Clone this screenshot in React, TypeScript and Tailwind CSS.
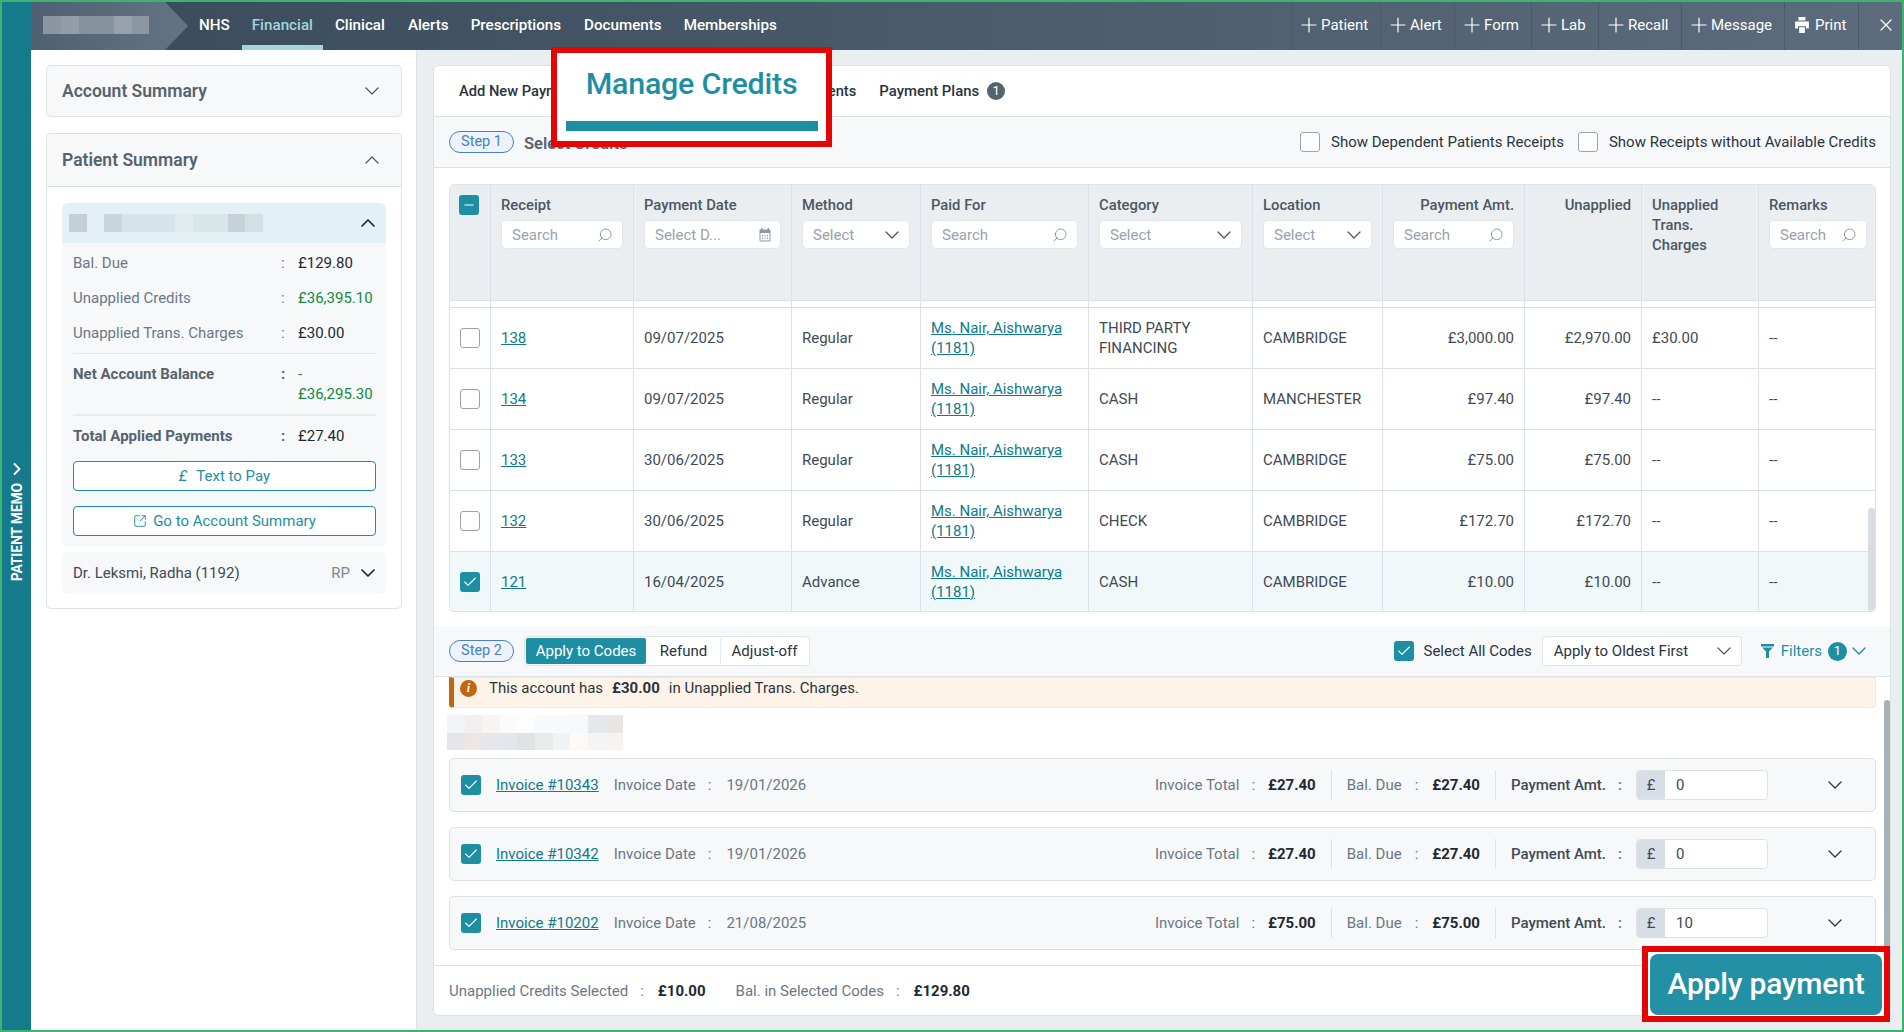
import React from "react";
import { ChevronDown, ChevronUp, ChevronRight, Search, Plus, X, Check, Minus, SquareArrowOutUpRight } from "lucide-react";

const COLS = "grid grid-cols-[41px_143px_158px_129px_168px_164px_130px_142px_117px_117px_118px]";

const Box = ({ on }: { on?: boolean }) =>
  on ? (
    <span className="w-5 h-5 rounded-[3px] bg-[#1e8fa3] flex items-center justify-center shrink-0">
      <Check size={16} strokeWidth={1.6} className="text-white" />
    </span>
  ) : (
    <span className="w-5 h-5 rounded-[3px] bg-white border border-[#98a3ae] shrink-0 block" />
  );

const Cal = () => (
  <svg width="12" height="14" viewBox="0 0 12 14" className="shrink-0">
    <rect x="0.5" y="1.5" width="11" height="12" rx="1" fill="#8c97a3" />
    <rect x="2" y="0" width="1.5" height="3" fill="#8c97a3" />
    <rect x="8.5" y="0" width="1.5" height="3" fill="#8c97a3" />
    <rect x="1.5" y="5" width="9" height="7.5" fill="#fff" />
    <path d="M3 7h1.2v1.2H3zM5.4 7h1.2v1.2H5.4zM7.8 7H9v1.2H7.8zM3 9.5h1.2v1.2H3zM5.4 9.5h1.2v1.2H5.4zM7.8 9.5H9v1.2H7.8z" fill="#8c97a3" />
  </svg>
);

const Funnel = () => (
  <svg width="13" height="14" viewBox="0 0 13 14" className="shrink-0">
    <path d="M0 0h13v2.4H0zM1.2 3.4h10.6L8 7.6V14H5V7.6z" fill="#1e8fa3" />
  </svg>
);

const SearchInput = ({ w }: { w: string }) => (
  <div className={`h-[29px] bg-white rounded-[5px] border border-[#e2e6ea] flex items-center justify-between pl-[10px] pr-[9px] text-[#98a3ae] ${w}`}>
    <span>Search</span>
    <Search size={16} strokeWidth={1.3} className="-scale-x-100 text-[#7f8a96]" />
  </div>
);

const SelectInput = ({ w, t }: { w: string; t: string }) => (
  <div className={`h-[29px] bg-white rounded-[5px] border border-[#e2e6ea] flex items-center justify-between pl-[10px] pr-[5px] text-[#98a3ae] ${w}`}>
    <span>{t}</span>
    <ChevronDown size={24} strokeWidth={1.3} className="text-[#4b5763]" />
  </div>
);

const rows = [
  { id: "138", d: "09/07/2025", m: "Regular", c: "THIRD PARTY FINANCING", l: "CAMBRIDGE", p: "£3,000.00", u: "£2,970.00", t: "£30.00" },
  { id: "134", d: "09/07/2025", m: "Regular", c: "CASH", l: "MANCHESTER", p: "£97.40", u: "£97.40", t: "--" },
  { id: "133", d: "30/06/2025", m: "Regular", c: "CASH", l: "CAMBRIDGE", p: "£75.00", u: "£75.00", t: "--" },
  { id: "132", d: "30/06/2025", m: "Regular", c: "CHECK", l: "CAMBRIDGE", p: "£172.70", u: "£172.70", t: "--" },
  { id: "121", d: "16/04/2025", m: "Advance", c: "CASH", l: "CAMBRIDGE", p: "£10.00", u: "£10.00", t: "--", sel: true },
];

const invoices = [
  { n: "#10343", d: "19/01/2026", t: "£27.40", b: "£27.40", a: "0" },
  { n: "#10342", d: "19/01/2026", t: "£27.40", b: "£27.40", a: "0" },
  { n: "#10202", d: "21/08/2025", t: "£75.00", b: "£75.00", a: "10" },
];

const cellB = "border-r border-[#dce1e7] px-[10px] flex items-center";
const headB = "border-r border-[#dce1e7] px-[10px] pt-[10px]";

const logoCells = ["w-[18px] bg-[#8b96a2]", "w-[18px] bg-[#939daa]", "w-[35px] bg-[#87929f]", "w-[18px] bg-[#96a1ab]", "w-[17px] bg-[#8c97a4]"];
const nameCells = ["w-[18px] bg-[#c4d0d5]", "w-[17px] bg-[#e3eff4]", "w-[18px] bg-[#c9d6db]", "w-[53px] bg-[#d6e3e8]", "w-[18px] bg-[#dfebef]", "w-[35px] bg-[#d8e5e9]", "w-[17px] bg-[#c6d2d7]", "w-[18px] bg-[#d2dfe3]"];
const topCells = ["bg-[#f2f4f6]", "bg-[#f3eff0]", "bg-[#f8f4f2]", "bg-[#fbfbf9]", "bg-[#fcfdfe]", "bg-[#f8f9fb]", "bg-[#f8f9fb]", "bg-[#f7f8fa]", "bg-[#e4e8ec]", "bg-[#e9e5e4]"];
const botCells = ["bg-[#e3e5e8]", "bg-[#efe5e5]", "bg-[#e6e7ea]", "bg-[#e3e6ec]", "bg-[#e1e2e5]", "bg-[#e9eaea]", "bg-[#f0f2f5]", "bg-[#fcf9f6]", "bg-[#f3f4f6]", "bg-[#f9f3f0]"];

const tools: [string, string][] = [
  ["Patient", "w-[89px]"],
  ["Alert", "w-[74px]"],
  ["Form", "w-[77px]"],
  ["Lab", "w-[67px]"],
  ["Recall", "w-[83px]"],
  ["Message", "w-[103px]"],
];

export default function App() {
  return (
    <div className="relative w-[1904px] h-[1032px] overflow-hidden border-2 border-[#3cb371] flex bg-[#ebeef1] font-[Roboto,sans-serif] text-[15px] leading-5 text-[#3f4a56]">
      {/* memo strip */}
      <div className="w-[29px] shrink-0 bg-[#157a8c] flex flex-col items-center justify-start pt-[457px] text-white">
        <ChevronRight size={20} strokeWidth={2.2} className="mb-[4px]" />
        <span className="[writing-mode:vertical-rl] rotate-180 font-bold text-[14px] leading-none tracking-[-0.2px]">PATIENT MEMO</span>
      </div>

      <div className="flex-1 flex flex-col min-w-0">
        {/* header */}
        <header className="h-[48px] shrink-0 flex items-stretch bg-linear-to-r from-[#394a5b] to-[#5c6c7d] text-white font-medium">
          <div className="w-[157px] shrink-0 bg-linear-to-r from-[#4f6072] to-[#647484] [clip-path:polygon(0_0,134px_0,157px_50%,134px_100%,0_100%)] pl-[12px] pt-[14px]">
            <div className="flex h-[18px]">
              {logoCells.map((c) => (
                <span key={c} className={c} />
              ))}
            </div>
          </div>
          <nav className="flex items-stretch ml-[11px] text-[15.2px]">
            <span className="flex items-center pb-[2px]">NHS</span>
            <span className="flex items-center ml-[12px] px-[10px] border-b-[5px] border-[#a3d5dc] text-[#a3d5dc] pt-[3px]">Financial</span>
            <span className="flex items-center pb-[2px] ml-[12px]">Clinical</span>
            <span className="flex items-center pb-[2px] ml-[23px]">Alerts</span>
            <span className="flex items-center pb-[2px] ml-[22px]">Prescriptions</span>
            <span className="flex items-center pb-[2px] ml-[23px]">Documents</span>
            <span className="flex items-center pb-[2px] ml-[22px]">Memberships</span>
          </nav>
          <div className="ml-auto flex items-stretch">
            {tools.map(([t, w]) => (
              <span key={t} className={`${w} border-l border-[#4a5a6a] flex items-center pl-[5px] pb-[2px] font-normal`}>
                <Plus size={24} strokeWidth={1.2} />
                {t}
              </span>
            ))}
            <span className="w-[74px] border-l border-[#4a5a6a] flex items-center pl-[10px] pb-[2px] gap-[6px] font-normal">
              <svg width="14" height="16" viewBox="0 0 12 14">
                <path d="M3 0h6v3H3zM0 4h12v6H9.5V8h-7v2H0zM3.5 9h5v5h-5z" fill="#fff" />
              </svg>
              Print
            </span>
            <span className="w-[44px] border-l border-[#4a5a6a] flex items-center pl-[17px] pb-[2px]">
              <X size={20} strokeWidth={1.5} />
            </span>
          </div>
        </header>

        <div className="flex-1 flex min-h-0">
          {/* sidebar */}
          <aside className="w-[386px] shrink-0 bg-white border-r border-[#dde2e7] pl-[15px] pr-[14px] pt-[15px] flex flex-col gap-4">
            <div className="h-[52px] rounded-[5px] border border-[#dde2e7] bg-[#f6f8fa] flex items-center justify-between pl-[15px] pr-[17px]">
              <span className="text-[17.5px] font-semibold text-[#55636f]">Account Summary</span>
              <ChevronDown size={24} strokeWidth={1.2} className="text-[#4b5763]" />
            </div>
            <div className="rounded-[5px] border border-[#dde2e7] pb-[15px]">
              <div className="h-[53px] bg-[#f6f8fa] border-b border-[#dde2e7] flex items-center justify-between pl-[15px] pr-[17px] rounded-t-[5px]">
                <span className="text-[17.5px] font-semibold text-[#55636f]">Patient Summary</span>
                <ChevronUp size={24} strokeWidth={1.2} className="text-[#4b5763]" />
              </div>
              <div className="mx-[15px] mt-[16px]">
                <div className="h-10 rounded-t-[6px] bg-[#e3f1f6] flex items-center justify-between pl-[7px] pr-[6px]">
                  <div className="flex h-[18px]">
                    {nameCells.map((c) => (
                      <span key={c} className={c} />
                    ))}
                  </div>
                  <ChevronUp size={24} strokeWidth={1.7} className="text-[#1f2933]" />
                </div>
                <div className="bg-[#f6f8fa] rounded-b-[6px] pl-[11px] pr-[10px] pt-[10px] pb-[11px]">
                  <div className="flex flex-col gap-[15px]">
                    <div className="grid grid-cols-[208px_17px_1fr]">
                      <span className="text-[#6b7785]">Bal. Due</span>
                      <span className="text-[#6b7785]">:</span>
                      <span className="text-[#1f2933]">£129.80</span>
                    </div>
                    <div className="grid grid-cols-[208px_17px_1fr]">
                      <span className="text-[#6b7785]">Unapplied Credits</span>
                      <span className="text-[#6b7785]">:</span>
                      <span className="text-[#118a3e]">£36,395.10</span>
                    </div>
                    <div className="grid grid-cols-[208px_17px_1fr]">
                      <span className="text-[#6b7785]">Unapplied Trans. Charges</span>
                      <span className="text-[#6b7785]">:</span>
                      <span className="text-[#1f2933]">£30.00</span>
                    </div>
                  </div>
                  <div className="mt-[10px] border-t border-[#e4e8ec] pt-[10px] grid grid-cols-[208px_17px_1fr]">
                    <span className="font-bold text-[#55636f]">Net Account Balance</span>
                    <span className="font-bold text-[#55636f]">:</span>
                    <span className="text-[#118a3e]">
                      -<br />£36,295.30
                    </span>
                  </div>
                  <div className="mt-[10px] border-t-2 border-[#e9ecef] pt-[10px] grid grid-cols-[208px_17px_1fr]">
                    <span className="font-bold text-[#55636f]">Total Applied Payments</span>
                    <span className="font-bold text-[#55636f]">:</span>
                    <span className="text-[#1f2933]">£27.40</span>
                  </div>
                  <div className="mt-[15px] h-[30px] rounded-[4px] bg-white border border-[#1e8fa3] text-[#1e8fa3] flex items-center justify-center gap-[9px]">
                    <span className="italic">£</span>
                    <span>Text to Pay</span>
                  </div>
                  <div className="mt-[15px] h-[30px] rounded-[4px] bg-white border border-[#1e8fa3] text-[#1e8fa3] flex items-center justify-center gap-[6px]">
                    <SquareArrowOutUpRight size={14} strokeWidth={1.6} />
                    <span>Go to Account Summary</span>
                  </div>
                </div>
                <div className="mt-[5px] h-[41px] rounded-[5px] bg-[#f6f8fa] flex items-center pl-[11px] pr-[6px]">
                  <span className="flex-1">Dr. Leksmi, Radha (1192)</span>
                  <span className="text-[#7d8893] mr-[6px]">RP</span>
                  <ChevronDown size={24} strokeWidth={1.7} className="text-[#1f2933]" />
                </div>
              </div>
            </div>
          </aside>

          {/* main */}
          <main className="flex-1 min-w-0 pl-4 pr-[11px] pt-[15px] pb-[14px]">
            <div className="relative h-[951px] bg-white rounded-[6px] border border-[#dde2e7] flex flex-col overflow-hidden">
              {/* tabs */}
              <div className="h-[51px] shrink-0 border-b border-[#dde2e7] flex items-center gap-[20px] pl-[25px] text-[#2a343e] font-medium text-[14.7px]">
                <span>Add New Payment</span>
                <span>Manage Credits</span>
                <span>Recurring Payments</span>
                <span className="ml-[3px] flex items-center gap-[8px] text-[14.9px]">
                  Payment Plans
                  <span className="w-[18px] h-[18px] rounded-full bg-[#55636f] text-white flex items-center justify-center text-[13px] font-normal">1</span>
                </span>
              </div>
              {/* step 1 */}
              <div className="h-[51px] shrink-0 bg-[#f6f8fa] border-b border-[#dde2e7] flex items-center pl-[15px] pr-[14px]">
                <span className="h-[22px] w-[65px] rounded-full border border-[#4a7fc1] bg-[#eef3fb] text-[#4a7fc1] text-[14.5px] flex items-center justify-center">Step 1</span>
                <span className="ml-[10px] pt-[3px] font-semibold text-[16.5px] text-[#55636f]">Select Credits</span>
                <span className="ml-auto flex items-center gap-[11px] text-[#2a343e]">
                  <Box />
                  Show Dependent Patients Receipts
                  <span className="ml-[3px]"><Box /></span>
                  Show Receipts without Available Credits
                </span>
              </div>
              {/* table */}
              <div className="h-[458px] shrink-0 pl-[15px] pt-[16px] pr-[14px]">
                <div className="relative rounded-[5px] border border-[#dce1e7] overflow-hidden">
                  <div className={`${COLS} h-[116px] bg-[#ebeef1] text-[#4b5763] font-medium text-[14.8px] border-b border-[#dce1e7]`}>
                    <div className="border-r border-[#dce1e7] pt-[10px] pl-[9px]">
                      <span className="w-5 h-5 rounded-[3px] bg-[#1e8fa3] flex items-center justify-center">
                        <Minus size={14} strokeWidth={2} className="text-white" />
                      </span>
                    </div>
                    <div className={headB}>
                      <div>Receipt</div>
                      <div className="mt-[5px] font-normal text-[15px]"><SearchInput w="w-full" /></div>
                    </div>
                    <div className={headB}>
                      <div>Payment Date</div>
                      <div className="mt-[5px] font-normal text-[15px] h-[29px] bg-white rounded-[5px] border border-[#e2e6ea] flex items-center justify-between pl-[10px] pr-[9px] text-[#98a3ae]">
                        <span>Select D...</span>
                        <Cal />
                      </div>
                    </div>
                    <div className={headB}>
                      <div>Method</div>
                      <div className="mt-[5px] font-normal text-[15px]"><SelectInput w="w-full" t="Select" /></div>
                    </div>
                    <div className={headB}>
                      <div>Paid For</div>
                      <div className="mt-[5px] font-normal text-[15px]"><SearchInput w="w-full" /></div>
                    </div>
                    <div className={headB}>
                      <div>Category</div>
                      <div className="mt-[5px] font-normal text-[15px]"><SelectInput w="w-full" t="Select" /></div>
                    </div>
                    <div className={headB}>
                      <div>Location</div>
                      <div className="mt-[5px] font-normal text-[15px]"><SelectInput w="w-full" t="Select" /></div>
                    </div>
                    <div className={headB}>
                      <div className="text-right">Payment Amt.</div>
                      <div className="mt-[5px] font-normal text-[15px]"><SearchInput w="w-full" /></div>
                    </div>
                    <div className={`${headB} text-right`}>Unapplied</div>
                    <div className={headB}>Unapplied Trans. Charges</div>
                    <div className="px-[10px] pt-[10px]">
                      <div>Remarks</div>
                      <div className="mt-[5px] font-normal text-[15px]"><SearchInput w="w-full" /></div>
                    </div>
                  </div>
                  <div className={`${COLS} h-[7px] border-b border-[#dce1e7]`}>
                    {[0, 1, 2, 3, 4, 5, 6, 7, 8, 9].map((i) => (
                      <span key={i} className="border-r border-[#dce1e7]" />
                    ))}
                  </div>
                  {rows.map((r) => (
                    <div
                      key={r.id}
                      className={`${COLS} ${r.sel ? "h-[59px] bg-[#f0f8fa]" : "h-[61px] border-b border-[#dce1e7]"}`}
                    >
                      <div className="border-r border-[#dce1e7] flex items-center justify-center">
                        <Box on={r.sel} />
                      </div>
                      <div className={cellB}>
                        <a className="underline text-[#0f7a8a]">{r.id}</a>
                      </div>
                      <div className={cellB}>{r.d}</div>
                      <div className={cellB}>{r.m}</div>
                      <div className={cellB}>
                        <a className="underline text-[#0f7a8a]">Ms. Nair, Aishwarya (1181)</a>
                      </div>
                      <div className={cellB}>{r.c}</div>
                      <div className={cellB}>{r.l}</div>
                      <div className={`${cellB} justify-end`}>{r.p}</div>
                      <div className={`${cellB} justify-end`}>{r.u}</div>
                      <div className={cellB}>{r.t}</div>
                      <div className="px-[10px] flex items-center">--</div>
                    </div>
                  ))}
                  <span className="absolute right-0 bottom-0 w-[7px] h-[103px] rounded-[3px] bg-[#d8dde2]" />
                </div>
              </div>
              {/* step 2 */}
              <div className="h-[51px] shrink-0 bg-[#f6f8fa] border-b border-[#dde2e7] flex items-center pl-[15px] pr-[19px]">
                <span className="h-[22px] w-[65px] rounded-full border border-[#4a7fc1] bg-[#eef3fb] text-[#4a7fc1] text-[14.5px] flex items-center justify-center">Step 2</span>
                <div className="ml-[10px] h-[30px] flex items-stretch rounded-[4px] border border-[#e0e4e9] bg-white p-px text-[#2a343e]">
                  <span className="w-[120px] bg-[#1e8fa3] text-white rounded-[2px] flex items-center justify-center">Apply to Codes</span>
                  <span className="w-[75px] border-r border-[#e8ebee] pl-px flex items-center justify-center">Refund</span>
                  <span className="w-[87px] flex items-center justify-center">Adjust-off</span>
                </div>
                <div className="ml-auto flex items-center text-[#2a343e]">
                  <Box on />
                  <span className="ml-[10px]">Select All Codes</span>
                  <div className="ml-[10px] w-[200px] h-[30px] rounded-[4px] bg-white border border-[#e0e4e9] flex items-center justify-between pl-[11px] pr-[5px]">
                    <span>Apply to Oldest First</span>
                    <ChevronDown size={24} strokeWidth={1.2} className="text-[#4b5763]" />
                  </div>
                  <span className="ml-[19px]"><Funnel /></span>
                  <span className="ml-[7px] text-[#1e8fa3]">Filters</span>
                  <span className="ml-[6px] w-[19px] h-[19px] rounded-full bg-[#1e8fa3] text-white text-[13px] flex items-center justify-center">1</span>
                  <ChevronDown size={24} strokeWidth={1.4} className="text-[#1e8fa3]" />
                </div>
              </div>
              {/* invoices */}
              <div className="h-[288px] shrink-0 relative pl-[15px] pr-[14px]">
                <div className="h-[31px] bg-[#fef3e8] border border-[#fbe6d0] border-l-[5px] border-l-[#c0680f] rounded-b-[4px] flex items-center pl-[6px] pb-[9px] text-[#2a343e]">
                  <span className="w-[17px] h-[17px] rounded-full bg-[#c0680f] text-white text-[12px] italic font-bold flex items-center justify-center font-[Liberation_Serif,serif]">i</span>
                  <span className="ml-[12px]">This account has</span>
                  <span className="ml-[9px] font-bold">£30.00</span>
                  <span className="ml-[9px]">in Unapplied Trans. Charges.</span>
                </div>
                <div className="mt-[7px] -ml-[2px] w-[176px] h-[35px] flex flex-col">
                  <div className="flex-1 grid grid-cols-10">
                    {topCells.map((c, i) => (
                      <span key={i} className={c} />
                    ))}
                  </div>
                  <div className="flex-1 grid grid-cols-10">
                    {botCells.map((c, i) => (
                      <span key={i} className={c} />
                    ))}
                  </div>
                </div>
                <div className="mt-2 flex flex-col gap-[15px]">
                  {invoices.map((v) => (
                    <div key={v.n} className="h-[54px] rounded-[5px] border border-[#dde2e7] bg-[#f6f8fa] flex items-center pl-[11px] pr-[28px] text-[#6b7785]">
                      <Box on />
                      <a className="ml-[15px] underline text-[#0f7a8a]">Invoice {v.n}</a>
                      <span className="ml-[15px]">Invoice Date</span>
                      <span className="ml-[12px]">:</span>
                      <span className="ml-[15px]">{v.d}</span>
                      <span className="ml-auto">Invoice Total</span>
                      <span className="ml-[12px]">:</span>
                      <span className="ml-[13px] font-bold text-[#1f2933]">{v.t}</span>
                      <span className="ml-[15px] h-[30px] border-l border-[#dde2e7]" />
                      <span className="ml-[15px]">Bal. Due</span>
                      <span className="ml-[13px]">:</span>
                      <span className="ml-[14px] font-bold text-[#1f2933]">{v.b}</span>
                      <span className="ml-[15px] h-[30px] border-l border-[#dde2e7]" />
                      <span className="ml-[15px] font-medium text-[#3f4a56]">Payment Amt.</span>
                      <span className="ml-[12px] font-medium">:</span>
                      <div className="ml-[14px] w-[132px] h-[30px] rounded-[4px] border border-[#dde2e7] bg-white flex overflow-hidden text-[#3f4a56]">
                        <span className="w-[28px] bg-[#d8dee6] flex items-center justify-center">£</span>
                        <span className="ml-[11px] flex items-center">{v.a}</span>
                      </div>
                      <ChevronDown size={24} strokeWidth={1.3} className="ml-[55px] text-[#2a343e]" />
                    </div>
                  ))}
                </div>
                <span className="absolute right-0 top-[23px] w-[6px] h-[260px] rounded-[3px] bg-[#a8b0b8]" />
              </div>
              {/* footer */}
              <div className="flex-1 border-t border-[#dde2e7] flex items-center pl-[15px] text-[#6b7785]">
                <span>Unapplied Credits Selected</span>
                <span className="ml-[12px]">:</span>
                <span className="ml-[14px] font-bold text-[#1f2933]">£10.00</span>
                <span className="ml-[30px]">Bal. in Selected Codes</span>
                <span className="ml-[12px]">:</span>
                <span className="ml-[14px] font-bold text-[#1f2933]">£129.80</span>
              </div>
            </div>
          </main>
        </div>
      </div>

      {/* annotations */}
      <div className="absolute left-[549px] top-[45px] w-[281px] h-[100px] bg-white border-[6px] border-[#e60505] flex flex-col items-center">
        <span className="mt-[11px] text-[30.4px] leading-[40px] font-medium text-[#1e8fa3] tracking-[-0.2px]">Manage Credits</span>
        <span className="mt-[17px] w-[252px] h-[10px] bg-[#1e8fa3]" />
      </div>
      <div className="absolute left-[1640px] top-[944px] w-[248px] h-[76px] bg-white border-[6px] border-[#e60505] flex items-center justify-center">
        <span className="w-[232px] h-[61px] rounded-[8px] bg-[#2490a5] text-white text-[30px] font-medium flex items-center justify-center tracking-[-0.2px]">Apply payment</span>
      </div>
    </div>
  );
}
